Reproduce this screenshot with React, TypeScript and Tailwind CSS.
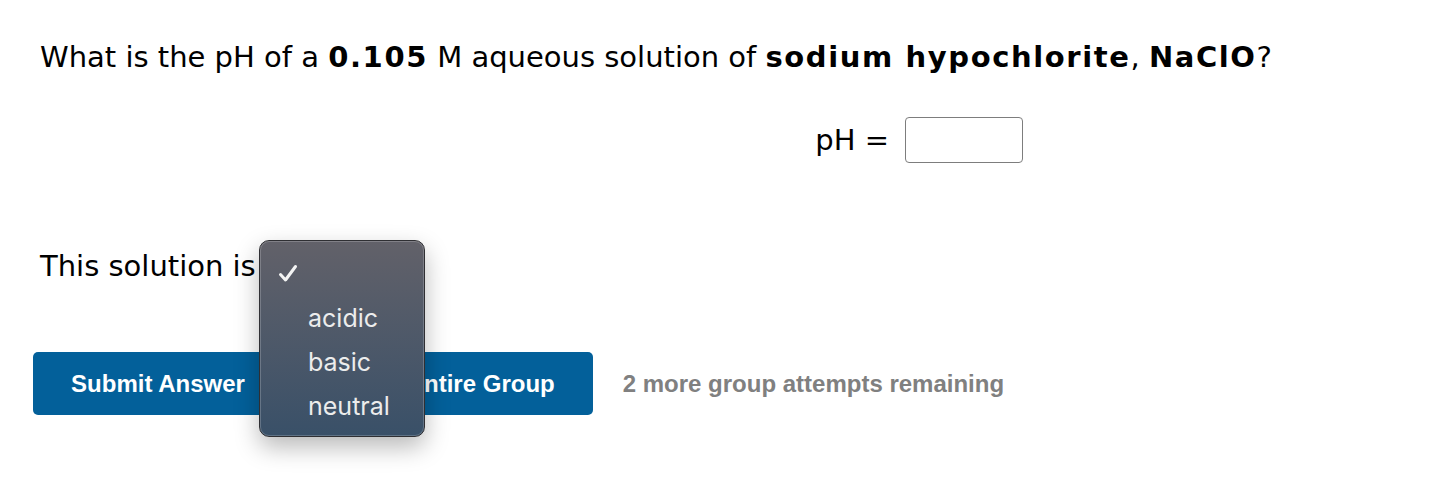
import React from "react";

const verdana = { fontFamily: '"DejaVu Sans", Verdana, sans-serif' };

export default function App() {
  return (
    <div className="relative min-h-screen bg-white text-black" style={verdana}>
      <div className="pl-[40px] pt-[38px]">
        <p className="text-[29px] leading-[38px]">
          What is the pH of a <b className="tracking-[1.6px]">0.105</b> M aqueous solution of{" "}
          <b className="tracking-[1.6px]">sodium hypochlorite</b>, <b className="tracking-[1.6px]">NaClO</b>?
        </p>

        {/* answer field */}
        <div className="mt-[41px] flex w-[983px] items-center justify-end gap-[16px]">
          <span className="text-[29px] leading-[38px]">pH =</span>
          <input
            type="text"
            className="h-[46px] w-[118px] rounded-[4px] border border-[#7d7d7d] bg-white"
          />
        </div>

        <p className="mt-[84px] text-[29px] leading-[38px]">This solution is</p>

        <div
          className="mt-[67px] -ml-[7px] flex items-center"
          style={{ fontFamily: '"Liberation Sans", Arial, sans-serif' }}
        >
          <button className="h-[63px] w-[250px] rounded-[5px] bg-[#03609a] text-[24px] font-bold text-white">
            Submit Answer
          </button>
          <button className="ml-[19px] h-[63px] rounded-[5px] bg-[#03609a] px-[38px] text-[24px] font-bold text-white">
            Retry Entire Group
          </button>
          <span className="ml-[30px] text-[24px] font-bold text-[#808080]">2 more group attempts remaining</span>
        </div>
      </div>

      {/* open select menu */}
      <div
        className="absolute left-[259px] top-[240px] h-[197px] w-[166px] rounded-[10px] border border-[#2f2f33] bg-gradient-to-b from-[#626169] to-[#395068] shadow-[0_10px_24px_rgba(0,0,0,0.28)]"
        style={{ fontFamily: 'Inter, "Liberation Sans", sans-serif' }}
      >
        <div className="absolute inset-0 rounded-[9px] border border-white/20" />
        <svg className="absolute left-[18px] top-[23px]" width="20" height="19" viewBox="0 0 20 19">
          <path
            d="M2.5 10.5 L7.5 16 L17.5 2.5"
            fill="none"
            stroke="#f4f4f4"
            strokeWidth="3"
            strokeLinecap="round"
            strokeLinejoin="round"
          />
        </svg>
        <div className="absolute left-[48px] top-[55px] flex flex-col text-[25px] leading-[44px] text-[#ececec]">
          <span>acidic</span>
          <span>basic</span>
          <span>neutral</span>
        </div>
      </div>
    </div>
  );
}
